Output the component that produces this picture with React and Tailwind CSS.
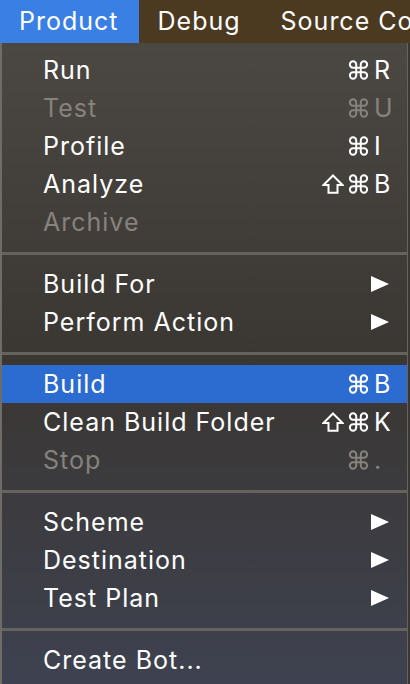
import React from "react";

const Tri = () => (
  <svg width="18" height="16" viewBox="0 0 18 16" className="block">
    <polygon points="0,0 18,8 0,16" fill="#ffffff" />
  </svg>
);

const Cmd = () => (
  <svg width="21" height="20" viewBox="-1 -1 22 22" className="block">
    <path
      d="M7.5,4 A3.5,3.5 0 1 0 4,7.5 H16 A3.5,3.5 0 1 0 12.5,4 V16 A3.5,3.5 0 1 0 16,12.5 H4 A3.5,3.5 0 1 0 7.5,16 Z"
      fill="none"
      stroke="currentColor"
      strokeWidth="2.2"
      strokeLinejoin="round"
    />
  </svg>
);

const Shift = () => (
  <svg width="22" height="20" viewBox="0 0 22 20" className="block">
    <polygon
      points="11,1.5 20.5,11 15.5,11 15.5,18.8 6.5,18.8 6.5,11 1.5,11"
      fill="none"
      stroke="currentColor"
      strokeWidth="2"
      strokeLinejoin="miter"
    />
  </svg>
);

function Row({ label, mods, keyc, disabled, sub, active }) {
  const color = disabled ? "text-[#86827c]" : "text-white";
  return (
    <div
      className={`flex h-[38px] items-center justify-between pl-[41px] pr-[19px] ${active ? "bg-[#2c6bd0]" : ""} ${color}`}
    >
      <span className="leading-none tracking-[1px]">{label}</span>
      {mods && (
        <span className="flex items-center">
          <span className="flex items-center gap-[4px]">
            {mods.includes("shift") && <Shift />}
            <Cmd />
          </span>
          <span className="w-[19px] pl-[5px] leading-none">{keyc}</span>
        </span>
      )}
      {sub && (
        <span className="mr-[-1px]">
          <Tri />
        </span>
      )}
    </div>
  );
}

const Sep = () => (
  <div className="flex h-[24px] items-center">
    <div className="h-[3px] w-full bg-[#66625d]" />
  </div>
);

export default function App() {
  return (
    <div className="w-[410px] h-[684px] overflow-hidden bg-[#3a3632] font-['Inter',sans-serif] text-[25px]">
      <div className="flex h-[43px] items-center bg-[#4b3920] text-white tracking-[1px]">
        <div className="flex h-full items-center bg-[#3a7fe3] pl-[19px] pr-[20px]">Product</div>
        <div className="pl-[19px]">Debug</div>
        <div className="pl-[40px] whitespace-nowrap">Source Control</div>
      </div>
      <div className="h-[641px] border-l-[2px] border-r-[1px] border-l-[#6f6b66] border-r-[#67635e] mr-[2px] bg-gradient-to-b from-[#4b4743] via-[#3a3632] to-[#3e4250] pt-[8px]">
        <Row label="Run" mods="cmd" keyc="R" />
        <Row label="Test" mods="cmd" keyc="U" disabled />
        <Row label="Profile" mods="cmd" keyc="I" />
        <Row label="Analyze" mods="shift cmd" keyc="B" />
        <Row label="Archive" disabled />
        <Sep />
        <Row label="Build For" sub />
        <Row label="Perform Action" sub />
        <Sep />
        <Row label="Build" mods="cmd" keyc="B" active />
        <Row label="Clean Build Folder" mods="shift cmd" keyc="K" />
        <Row label="Stop" mods="cmd" keyc="." disabled />
        <Sep />
        <Row label="Scheme" sub />
        <Row label="Destination" sub />
        <Row label="Test Plan" sub />
        <Sep />
        <Row label="Create Bot..." />
      </div>
    </div>
  );
}
